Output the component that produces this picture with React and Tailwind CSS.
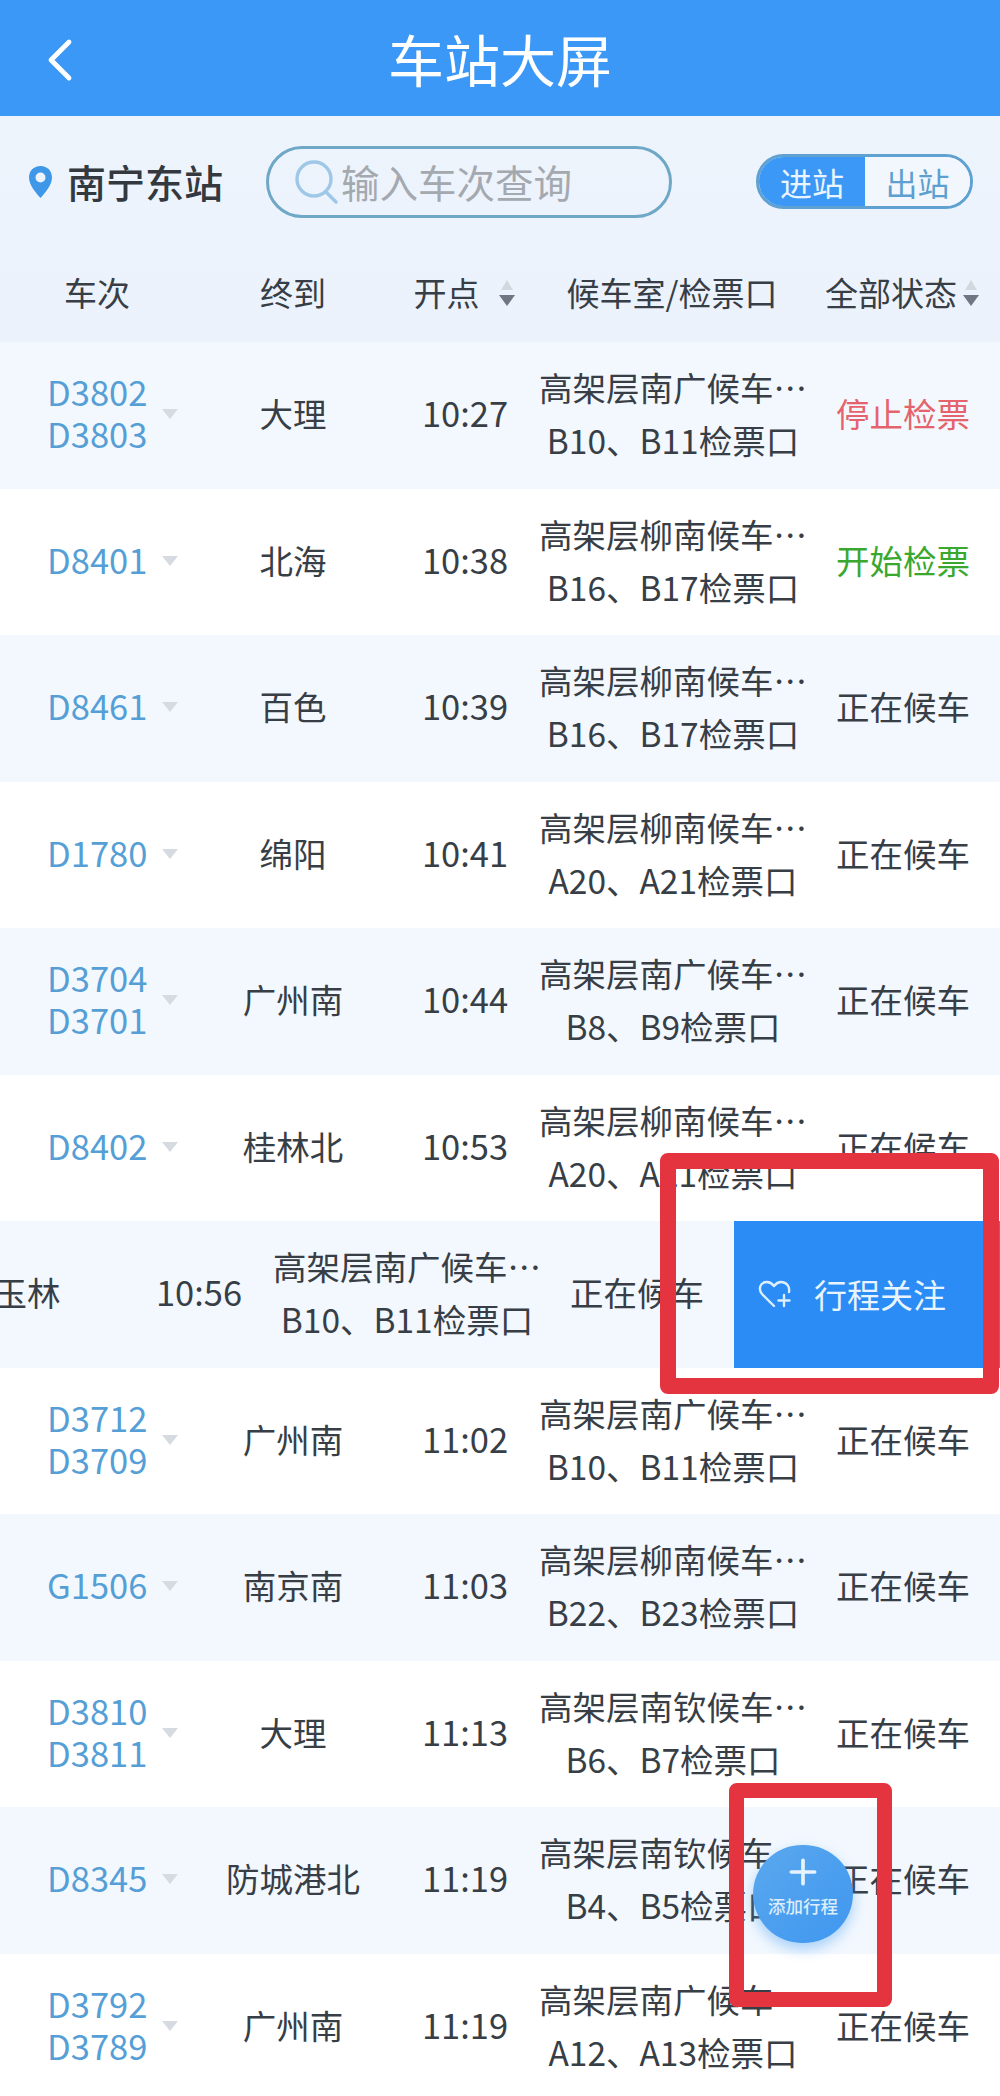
import { ChevronLeft, Plus } from 'lucide-react';

const rows = [
  { trains: ['D3802', 'D3803'], dest: '大理', time: '10:27', room: '高架层南广候车⋯', gate: 'B10、B11检票口', status: '停止检票', color: 'text-[#e5636d]' },
  { trains: ['D8401'], dest: '北海', time: '10:38', room: '高架层柳南候车⋯', gate: 'B16、B17检票口', status: '开始检票', color: 'text-[#3aa82e]' },
  { trains: ['D8461'], dest: '百色', time: '10:39', room: '高架层柳南候车⋯', gate: 'B16、B17检票口', status: '正在候车' },
  { trains: ['D1780'], dest: '绵阳', time: '10:41', room: '高架层柳南候车⋯', gate: 'A20、A21检票口', status: '正在候车' },
  { trains: ['D3704', 'D3701'], dest: '广州南', time: '10:44', room: '高架层南广候车⋯', gate: 'B8、B9检票口', status: '正在候车' },
  { trains: ['D8402'], dest: '桂林北', time: '10:53', room: '高架层柳南候车⋯', gate: 'A20、A21检票口', status: '正在候车' },
  { trains: [], dest: '玉林', time: '10:56', room: '高架层南广候车⋯', gate: 'B10、B11检票口', status: '正在候车', swiped: true },
  { trains: ['D3712', 'D3709'], dest: '广州南', time: '11:02', room: '高架层南广候车⋯', gate: 'B10、B11检票口', status: '正在候车' },
  { trains: ['G1506'], dest: '南京南', time: '11:03', room: '高架层柳南候车⋯', gate: 'B22、B23检票口', status: '正在候车' },
  { trains: ['D3810', 'D3811'], dest: '大理', time: '11:13', room: '高架层南钦候车⋯', gate: 'B6、B7检票口', status: '正在候车' },
  { trains: ['D8345'], dest: '防城港北', time: '11:19', room: '高架层南钦候车⋯', gate: 'B4、B5检票口', status: '正在候车' },
  { trains: ['D3792', 'D3789'], dest: '广州南', time: '11:19', room: '高架层南广候车⋯', gate: 'A12、A13检票口', status: '正在候车' },
];

const font = { fontFamily: '"Noto Sans CJK SC", "Noto Sans", sans-serif' };

function SortCaret() {
  return (
    <svg width="20" height="30" viewBox="0 0 20 30" className="shrink-0">
      <path d="M10 2 L16 12 L4 12 Z" fill="#d3d8df" />
      <path d="M2 17 L18 17 L10 28 Z" fill="#6f7782" />
    </svg>
  );
}

function TrainRow({ row, index }) {
  const rowBg = index % 2 === 0 ? 'bg-[#f3f8fe]' : 'bg-white';
  return (
    <div className={`h-[146.5px] overflow-hidden ${rowBg}`}>
      <div className={`flex h-full w-[1266px] ${row.swiped ? '-ml-[266px]' : ''}`}>
        <div className="grid h-full w-[1000px] shrink-0 grid-cols-[190px_206px_138px_276px_190px] items-center pb-[4px] text-center text-[33.5px] text-[#383e46]">
          <div className="flex items-center pl-[47px]">
            <div className="-mt-[2px] w-[115px] text-left text-[34.5px] leading-[42px] text-[#559fd6]">
              {row.trains.map((t) => (
                <div key={t}>{t}</div>
              ))}
            </div>
            <svg width="16" height="10" viewBox="0 0 16 10" className="mt-[2px]">
              <path d="M0 0 L16 0 L8 10 Z" fill="#d6dae1" />
            </svg>
          </div>
          <div>{row.dest}</div>
          <div className="text-[34.5px]">{row.time}</div>
          <div className="whitespace-nowrap pl-[2px] leading-[53px]">
            <div>{row.room}</div>
            <div>{row.gate}</div>
          </div>
          <div className={`pr-1 ${row.color || ''}`}>{row.status}</div>
        </div>
        {row.swiped && (
          <div className="flex h-full w-[266px] shrink-0 items-center bg-[#2b8cf5] pl-[23px] text-white">
            <svg width="36" height="30" viewBox="0 0 36 30" fill="none" stroke="#dcefff" strokeWidth="2.4" strokeLinecap="round" strokeLinejoin="round">
              <path d="M17 27 L5 15 C1 10 3 3 10 3 C13 3 15 4.5 17 7 C19 4.5 21 3 24 3 C30 3 33 8 32 13" />
              <path d="M27 16 V27 M21.5 21.5 H32.5" />
            </svg>
            <span className="ml-[21px] text-[33px] text-[#e8f4ff]">行程关注</span>
          </div>
        )}
      </div>
    </div>
  );
}

export default function App() {
  return (
    <div className="relative h-[2096px] w-[1000px] overflow-hidden bg-white" style={font}>
      <div className="relative flex h-[116px] items-center justify-center bg-[#3c98f6]">
        <ChevronLeft className="absolute left-[24px] top-[24px] text-white" size={72} strokeWidth={1.6} />
        <h1 className="text-[56px] font-normal text-white">车站大屏</h1>
      </div>

      <div className="bg-gradient-to-b from-[#eef4fc] to-[#ebf2fc]">
        <div className="flex h-[134px] items-center pb-[3px] pl-[28px]">
          <svg width="25" height="34" viewBox="0 0 25 34" className="shrink-0">
            <path fillRule="evenodd" d="M12.5 1 C5.5 1 1 6 1 12.5 C1 20 8 28 12.5 33 C17 28 24 20 24 12.5 C24 6 19.5 1 12.5 1 Z M12.5 7.5 A5 5 0 1 1 12.5 17.5 A5 5 0 1 1 12.5 7.5 Z" fill="#3f97e8" />
          </svg>
          <span className="ml-[14px] w-[199px] whitespace-nowrap text-[39px] font-medium text-[#33393f]">南宁东站</span>
          <div className="flex h-[72px] w-[406px] items-center rounded-[36px] border-[3px] border-[#6fa7c6] pl-[24px]">
            <svg width="46" height="46" viewBox="0 0 46 46" fill="none" stroke="#9fc8e8" strokeWidth="3.4" strokeLinecap="round" className="shrink-0">
              <circle cx="21" cy="20" r="17" />
              <path d="M33 33 L43 43" />
            </svg>
            <span className="ml-[2px] whitespace-nowrap text-[38.5px] text-[#a4a9b0]">输入车次查询</span>
          </div>
          <div className="ml-[84px] flex h-[55px] w-[217px] overflow-hidden rounded-[28px] border-[3px] border-[#5fa1d0] text-[32px]">
            <div className="flex w-[106px] items-center justify-center bg-[#3c98f6] text-[#eaf5ff]">进站</div>
            <div className="flex flex-1 items-center justify-center bg-[#f2f7fd] text-[#5c9fd0]">出站</div>
          </div>
        </div>

        <div className="grid h-[92px] grid-cols-[190px_206px_138px_276px_190px] items-center pb-[6px] text-center text-[33px] text-[#383e46]">
          <div className="pl-[4px]">车次</div>
          <div>终到</div>
          <div className="flex items-center justify-center gap-[17px] pl-[9px] pr-[9px]">
            <span>开点</span>
            <SortCaret />
          </div>
          <div>候车室/检票口</div>
          <div className="flex items-center gap-[4px] pl-[15px]">
            <span className="whitespace-nowrap">全部状态</span>
            <SortCaret />
          </div>
        </div>
      </div>

      {rows.map((row, i) => (
        <TrainRow key={row.time + i} row={row} index={i} />
      ))}

      {/* red annotation frames sit on top of the list */}
      <div className="absolute left-[660px] top-[1153px] h-[241px] w-[339px] rounded-[8px] border-[16px] border-[#e4343f]" />

      <div className="absolute left-[753px] top-[1845px] flex h-[98px] w-[100px] flex-col items-center rounded-full bg-gradient-to-br from-[#5aa8ee] to-[#3f97f0] shadow-[0_6px_14px_rgba(70,160,245,0.45)]">
        <Plus className="mt-[7px] text-[#e6f3ff]" size={40} strokeWidth={2.2} />
        <span className="mt-[1px] whitespace-nowrap text-[17.5px] font-medium text-[#dcedfc]">添加行程</span>
      </div>
      <div className="absolute left-[729px] top-[1783px] h-[224px] w-[163px] rounded-[8px] border-[15px] border-[#e4343f]" />
    </div>
  );
}
